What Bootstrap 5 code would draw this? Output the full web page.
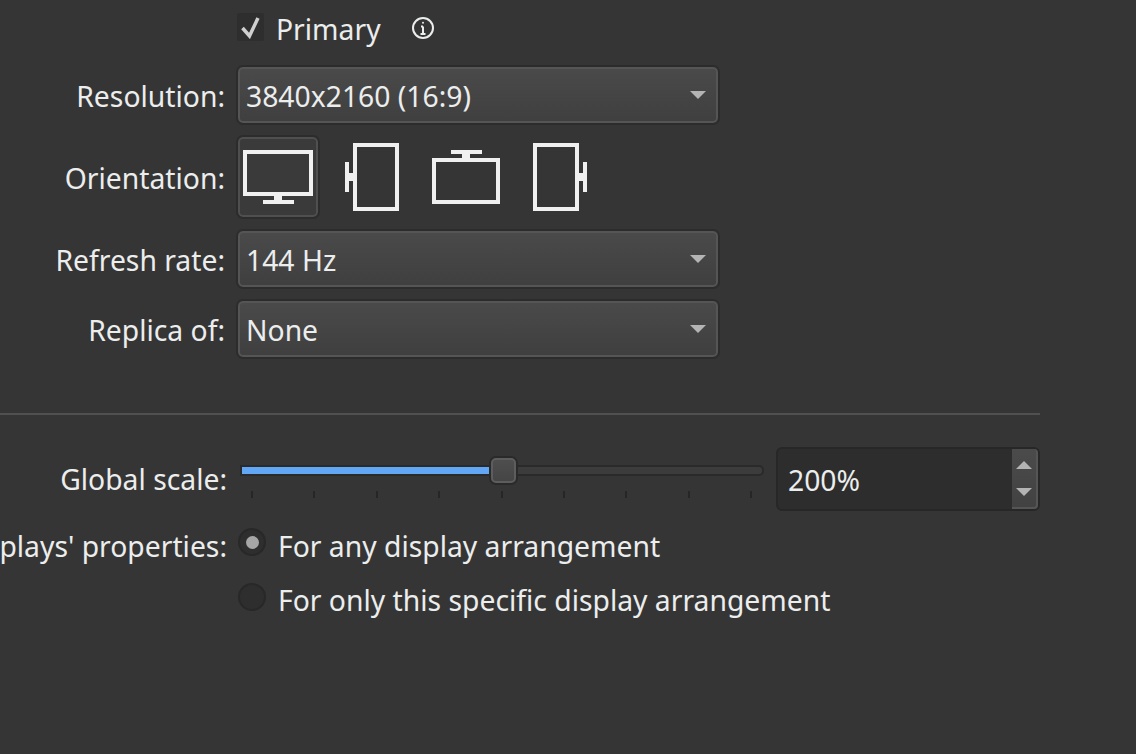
<!DOCTYPE html>
<html lang="en">
<head>
<meta charset="utf-8">
<title>Display settings</title>
<link href="https://cdn.jsdelivr.net/npm/bootstrap@5.3.0/dist/css/bootstrap.min.css" rel="stylesheet">
<style>
html,body{height:100%;overflow:hidden}
body{background:#353535;color:#eceded;font-family:"Noto Sans","Open Sans",sans-serif;font-size:28.3px;line-height:1.2}
.pane{width:1040px;height:754px;padding-top:13px}
.frow{display:flex;align-items:center;gap:11px}
.lbl{flex:0 0 226px;min-width:0;display:flex;justify-content:flex-end;white-space:nowrap;padding-right:1px}
.lbl-wide{flex-basis:227px;padding-right:0}
.txt{padding-top:4px}
.txt-half{padding-top:2px}
.txt-low{padding-top:6px}
.chk{width:27px;height:28px;background:#2e2e2e;display:flex;align-items:center;justify-content:center;border-radius:2px}
.combo.btn{width:482px;height:58px;padding:0 12px 0 8px;display:flex;align-items:center;justify-content:space-between;color:#eceded;font-size:28.3px;line-height:1.2;
  background:linear-gradient(#4a4a4a,#3f3f3f);border:1px solid #2c2c2c;border-radius:6px;box-shadow:0 0 0 1px #2c2c2c,inset 0 0 0 2px #555;text-align:left}
.tri{width:0;height:0;border-left:8px solid transparent;border-right:8px solid transparent;border-top:8px solid #b4b4b4}
.tri-up{width:0;height:0;border-left:8px solid transparent;border-right:8px solid transparent;border-bottom:8px solid #b4b4b4}
.orient.btn{width:82px;height:82px;padding:0;border:0;border-radius:6px;display:block;color:#f0f0f0}
.orient.on{background:#3a3a3a;border:1px solid #2c2c2c;box-shadow:0 0 0 1px #2c2c2c,inset 0 0 0 2px #4f4f4f}
.orient svg{display:block}
.rule{border:0;border-top:2px solid #505050;opacity:1;margin:55px 0 0}
.slidewrap{width:525px;padding-left:5px;margin:0 3px 3px -1px}
.track{display:flex;align-items:center;height:26px}
.fill{width:249px;height:7px;background:#62a6f6;box-shadow:0 0 0 2px #2a2a2a}
.knob{flex:0 0 25px;height:25px;background:linear-gradient(#4e4e4e,#454545);border:2px solid #5d5d5d;border-radius:5px;box-shadow:0 0 0 2px #2a2a2a;position:relative}
.rest{flex:1;height:7px;background:#3c3c3c;box-shadow:0 0 0 2px #2a2a2a;border-radius:0 3px 3px 0}
.ticks{display:flex;justify-content:space-between;padding:7px 10px 0 9px}
.ticks i{display:block;width:2px;height:7px;background:#262626}
.spin{width:264px;height:64px;background:#2d2d2d;border:2px solid #272727;border-radius:6px;display:flex;align-items:stretch}
.spinval{flex:1;padding:4px 0 0 10px;display:flex;align-items:center}
.spinbtn{flex:0 0 26px;margin:0;background:linear-gradient(#4b4b4b,#424242);border-radius:0 4px 4px 0;display:flex;flex-direction:column;justify-content:space-between;align-items:center;padding:12px 0 11px;border-right:2px solid #555;border-bottom:2px solid #555}
.radio-dot{width:28px;height:28px;border-radius:50%;background:#2e2e2e;border:2px solid #282828;display:flex;align-items:center;justify-content:center;flex:none;margin-top:-7px}
.radio-dot span{width:13px;height:13px;border-radius:50%;background:#a6a6a6}
.opt{display:flex;align-items:center;gap:12px;height:32px}
.info{margin:2px 0 0 30px}
</style>
</head>
<body>
<div class="pane">
  <div class="frow" style="height:28px">
    <div class="lbl"></div>
    <div class="d-flex align-items-center">
      <div class="chk"><svg width="20" height="24" viewBox="0 0 20 24"><path d="M1.5 13 8.5 21 17 3" fill="none" stroke="#cfcfcf" stroke-width="3.5"/></svg></div>
      <span class="ms-2 ps-1 txt-low">Primary</span>
      <svg class="info" width="24" height="24" viewBox="0 0 24 24" fill="none" stroke="#eceded" stroke-width="2"><circle cx="12" cy="12" r="10"/><path d="M12 10.5v7M9.5 18h5M10 10.5h2"/><circle cx="12" cy="6.8" r="1" fill="#eceded" stroke="none"/></svg>
    </div>
  </div>
  <div class="frow" style="margin-top:25px">
    <div class="lbl"><span class="txt">Resolution:</span></div>
    <button type="button" class="btn combo"><span class="txt">3840x2160 (16:9)</span><span class="tri"></span></button>
  </div>
  <div class="frow" style="margin-top:12px">
    <div class="lbl"><span class="txt">Orientation:</span></div>
    <div class="d-flex" style="gap:12px">
      <button type="button" class="btn orient on"><svg width="80" height="80" viewBox="1 1 80 80" fill="#f0f0f0"><path fill-rule="evenodd" d="M6 14h70v46H6zM10 18v38h62V18z"/><path d="M37 60h8v4h-8zM26 64h31v4H26z"/></svg></button>
      <button type="button" class="btn orient"><svg width="82" height="82" viewBox="0 0 82 82" fill="#f0f0f0"><path fill-rule="evenodd" d="M22 7h46v68H22zM26 11v60h38V11z"/><path d="M14 26h4v30h-4zM18 37h4v8h-4z"/></svg></button>
      <button type="button" class="btn orient"><svg width="82" height="82" viewBox="0 0 82 82" fill="#f0f0f0"><path fill-rule="evenodd" d="M7 22h68v46H7zM11 26v38h60V26z"/><path d="M26 14h31v4H26zM37 18h8v4h-8z"/></svg></button>
      <button type="button" class="btn orient"><svg width="82" height="82" viewBox="0 0 82 82" fill="#f0f0f0"><path fill-rule="evenodd" d="M14 7h46v68H14zM18 11v60h38V11z"/><path d="M64 26h4v30h-4zM60 37h4v8h-4z"/></svg></button>
    </div>
  </div>
  <div class="frow" style="margin-top:12px">
    <div class="lbl"><span class="txt">Refresh rate:</span></div>
    <button type="button" class="btn combo"><span class="txt">144 Hz</span><span class="tri"></span></button>
  </div>
  <div class="frow" style="margin-top:12px">
    <div class="lbl"><span class="txt">Replica of:</span></div>
    <button type="button" class="btn combo"><span class="txt">None</span><span class="tri"></span></button>
  </div>
  <hr class="rule">
  <div class="frow" style="margin-top:32px">
    <div class="lbl lbl-wide"><span class="txt-half">Global scale:</span></div>
    <div class="slidewrap">
      <div class="track"><div class="fill"></div><div class="knob"></div><div class="rest"></div></div>
      <div class="ticks"><i></i><i></i><i></i><i></i><i></i><i></i><i></i><i></i><i></i></div>
    </div>
    <div class="spin">
      <div class="spinval">200%</div>
      <div class="spinbtn"><span class="tri-up"></span><span class="tri"></span></div>
    </div>
  </div>
  <div class="frow" style="margin-top:17px">
    <div class="lbl lbl-wide"><span class="txt-half">Save displays' properties:</span></div>
    <div class="opt"><span class="radio-dot"><span></span></span><span class="txt-half">For any display arrangement</span></div>
  </div>
  <div class="frow" style="margin-top:21px">
    <div class="lbl lbl-wide"></div>
    <div class="opt"><span class="radio-dot"></span><span>For only this specific display arrangement</span></div>
  </div>
</div>
<script src="https://cdn.jsdelivr.net/npm/bootstrap@5.3.0/dist/js/bootstrap.bundle.min.js"></script>
</body>
</html>
